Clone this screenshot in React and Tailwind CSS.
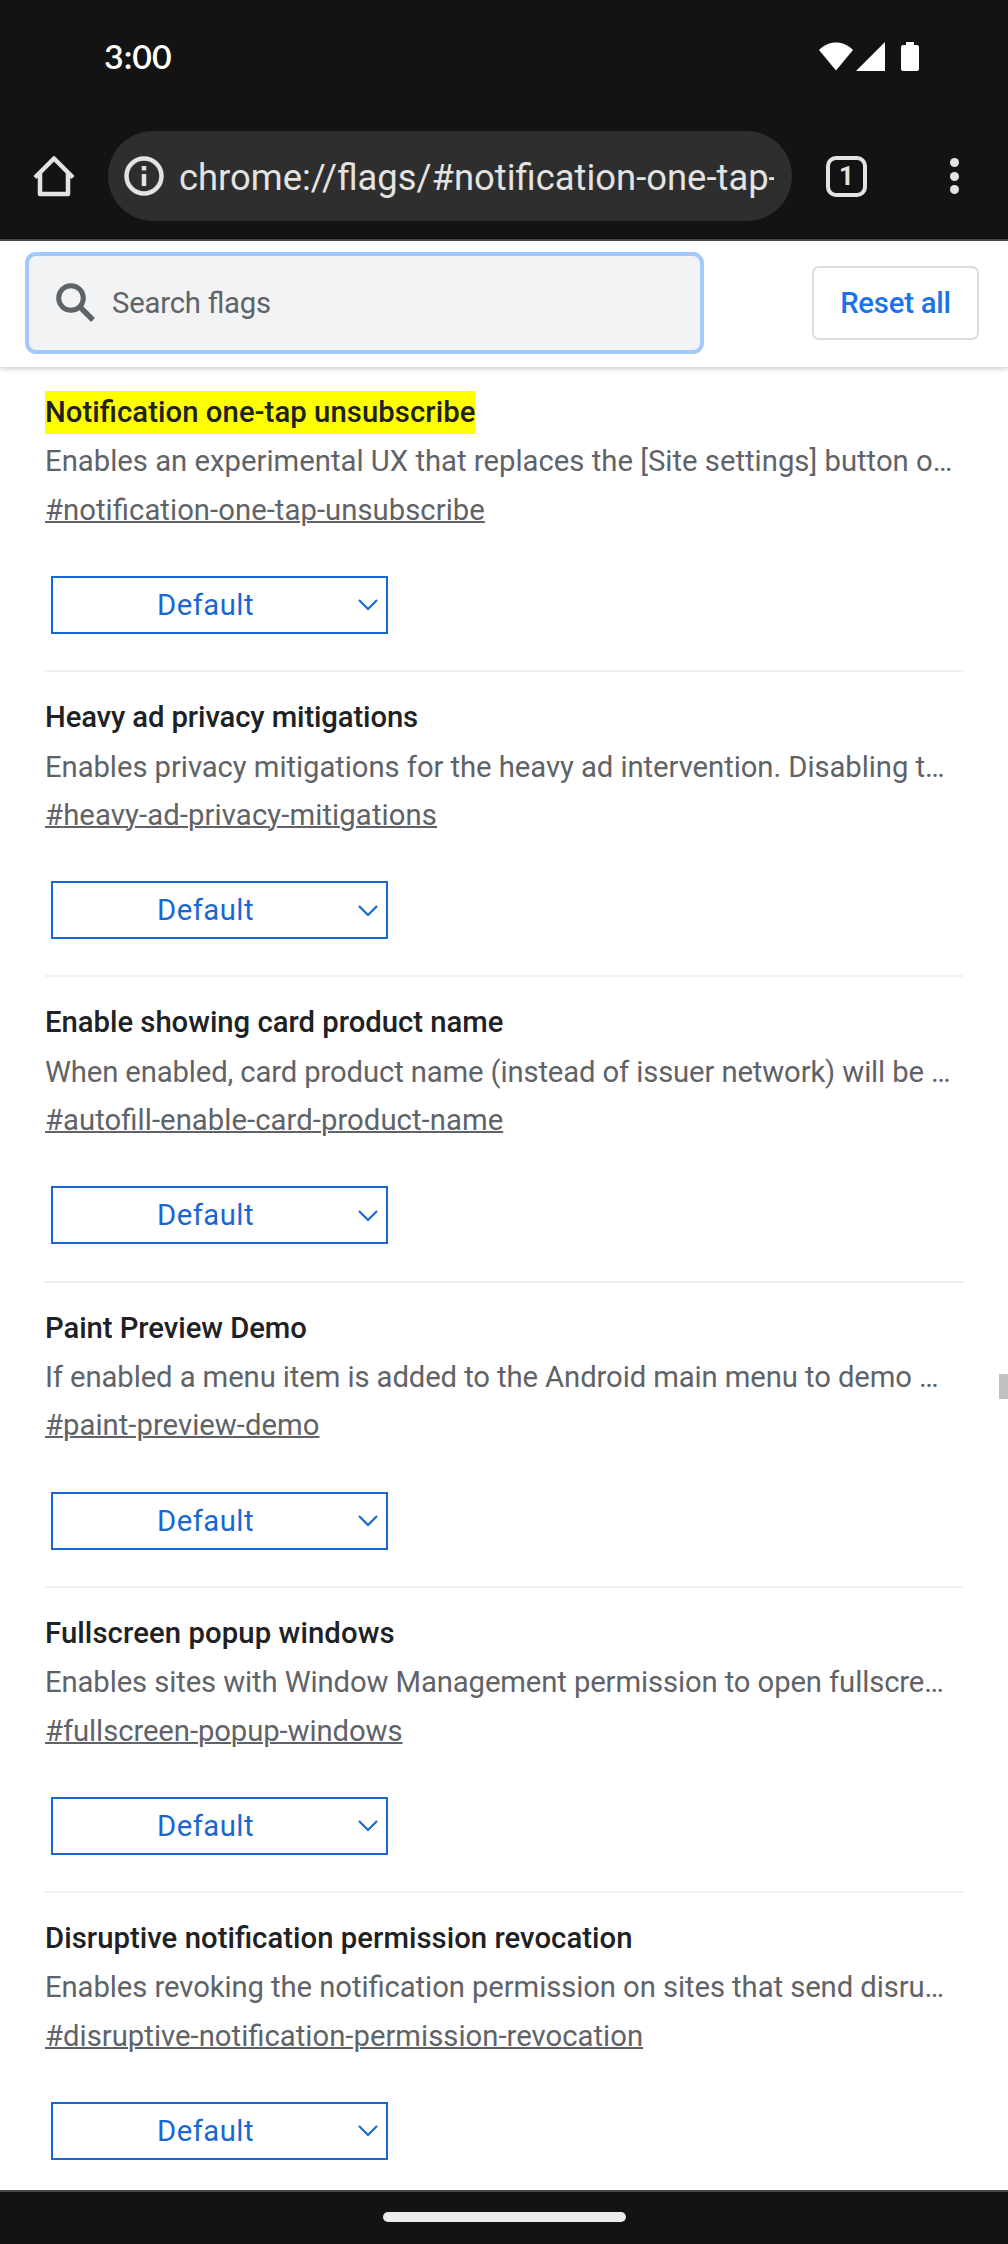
import React, { useState } from 'react';

const flags = [
  {
    id: 'notification-one-tap-unsubscribe',
    name: 'Notification one-tap unsubscribe',
    description: 'Enables an experimental UX that replaces the [Site settings] button o…',
    nameTracking: 'tracking-[0.07px]',
    descriptionTracking: 'tracking-[0.01px]',
    idTracking: 'tracking-[0.05px]',
  },
  {
    id: 'heavy-ad-privacy-mitigations',
    name: 'Heavy ad privacy mitigations',
    description: 'Enables privacy mitigations for the heavy ad intervention. Disabling t…',
    nameTracking: 'tracking-[-0.12px]',
    descriptionTracking: 'tracking-[-0.06px]',
    idTracking: 'tracking-[0.11px]',
  },
  {
    id: 'autofill-enable-card-product-name',
    name: 'Enable showing card product name',
    description: 'When enabled, card product name (instead of issuer network) will be …',
    nameTracking: 'tracking-[-0.01px]',
    descriptionTracking: 'tracking-[-0.13px]',
    idTracking: 'tracking-[0.06px]',
  },
  {
    id: 'paint-preview-demo',
    name: 'Paint Preview Demo',
    description: 'If enabled a menu item is added to the Android main menu to demo …',
    nameTracking: 'tracking-[-0.05px]',
    descriptionTracking: 'tracking-[-0.1px]',
    idTracking: 'tracking-[0.03px]',
  },
  {
    id: 'fullscreen-popup-windows',
    name: 'Fullscreen popup windows',
    description: 'Enables sites with Window Management permission to open fullscre…',
    nameTracking: 'tracking-[0.11px]',
    descriptionTracking: 'tracking-[-0.11px]',
    idTracking: 'tracking-[-0.08px]',
  },
  {
    id: 'disruptive-notification-permission-revocation',
    name: 'Disruptive notification permission revocation',
    description: 'Enables revoking the notification permission on sites that send disru…',
    nameTracking: 'tracking-[0.05px]',
    descriptionTracking: 'tracking-[-0.08px]',
    idTracking: 'tracking-[0.02px]',
  },
];

const StatusBar = () => (
  <div className="h-[112px] pl-[104px] pr-[89px] flex items-center justify-between text-white">
    <span className="text-[32px] leading-none font-semibold font-['Lato',sans-serif] origin-left scale-x-[1.06] pt-[2px]">3:00</span>
    <div className="flex items-center">
      <svg width="34" height="29" viewBox="0 0 34 29" fill="currentColor">
        <path d="M0 8C9.5-2 24.5-2 34 8L17 28.5z" />
      </svg>
      <svg className="ml-[3px]" width="29" height="29" viewBox="0 0 29 29" fill="currentColor">
        <path d="M29 0v29H0z" />
      </svg>
      <svg className="ml-4" width="18" height="29" viewBox="0 0 18 29" fill="currentColor">
        <path d="M5 0h8v3h3a2 2 0 0 1 2 2v22a2 2 0 0 1-2 2H2a2 2 0 0 1-2-2V5a2 2 0 0 1 2-2h3z" />
      </svg>
    </div>
  </div>
);

const Toolbar = () => (
  <div className="h-[129px] pt-[19px] flex items-start border-b-2 border-[#474747] text-[#e3e3e3]">
    <div className="h-[90px] w-[108px] flex items-center pl-[33px]">
      <svg width="42" height="42" viewBox="0 0 42 42" fill="none" stroke="currentColor" strokeWidth="4.5" strokeLinejoin="round">
        <path d="M2 22.5 21 3.5 40 22.5" />
        <path d="M7 18v21h28V18" />
      </svg>
    </div>
    <div className="h-[90px] w-[684px] rounded-full bg-[#2e2e2e] flex items-center pl-4 pr-[18px]">
      <svg className="shrink-0" width="40" height="40" viewBox="0 0 40 40" fill="none" stroke="currentColor">
        <circle cx="20" cy="20" r="17.5" strokeWidth="4.5" />
        <path d="M20 10v4.5M20 18v12" strokeWidth="4.5" />
      </svg>
      <div className="ml-[15px] mt-1 flex-1 overflow-hidden whitespace-nowrap text-[36.4px] leading-[48px]">
        chrome://flags/#notification-one-tap-
      </div>
    </div>
    <div className="h-[90px] flex-1 flex items-center pl-[34px] pr-[49px] justify-between">
      <div className="size-[41px] rounded-[10px] border-4 border-current flex items-center justify-center text-[26px] leading-none font-bold">
        1
      </div>
      <div className="flex flex-col gap-[4.5px]">
        <span className="size-[9px] rounded-full bg-current" />
        <span className="size-[9px] rounded-full bg-current" />
        <span className="size-[9px] rounded-full bg-current" />
      </div>
    </div>
  </div>
);

const SearchHeader = () => {
  const [query, setQuery] = useState('');

  return (
    <div className="relative h-[126px] pl-[25px] pr-[29px] pb-[2px] flex items-center justify-between bg-white shadow-[0_2px_5px_rgba(0,0,0,0.2)]">
      <div className="h-[102px] w-[679px] rounded-[11px] border-[4.5px] border-[#a3c8fa] bg-[#f1f3f4] flex items-center pl-[27px]">
        <svg width="40" height="40" viewBox="0 0 40 40" fill="none" stroke="#5f6368" strokeWidth="5">
          <circle cx="15" cy="15" r="12.3" />
          <path d="M24 24 37 37" strokeWidth="5.5" />
        </svg>
        <input
          type="text"
          value={query}
          onChange={(e) => setQuery(e.target.value)}
          placeholder="Search flags"
          className="ml-4 mt-[2px] flex-1 bg-transparent text-[29.25px] tracking-[-0.2px] text-[#202124] placeholder:text-[#5f6368] focus:outline-none"
        />
      </div>
      <button className="h-[74px] w-[167px] pt-[1px] rounded-[7px] border-2 border-[#dadce0] text-[29.25px] tracking-[-0.2px] font-medium text-[#1a73e8]">
        Reset all
      </button>
    </div>
  );
};

const Flag = ({ flag, highlighted }) => (
  <div className="h-[305.2px] pt-6 border-b-2 border-[#eff0f1] text-[29.25px] leading-[43px] text-[#5f6368]">
    <h3 className={`font-medium text-[#202124] ${flag.nameTracking}`}>
      <span className={highlighted ? 'inline-block bg-[#ffff00]' : 'inline-block'}>{flag.name}</span>
    </h3>
    <p className={`mt-[6.4px] whitespace-nowrap ${flag.descriptionTracking}`}>{flag.description}</p>
    <a
      href={`#${flag.id}`}
      className={`mt-[5.4px] block w-fit underline decoration-2 whitespace-nowrap ${flag.idTracking}`}
    >
      #{flag.id}
    </a>
    <button className="mt-[44.2px] ml-[6px] h-[58px] w-[337px] pt-[1px] border-2 border-[#1967d2] flex items-center pr-[8px] text-[#1967d2]">
      <span className="flex-1 tracking-[0.5px]">Default</span>
      <svg width="20" height="12" viewBox="0 0 20 12" fill="none" stroke="currentColor" strokeWidth="2.2">
        <path d="M1 1l9 9 9-9" />
      </svg>
    </button>
  </div>
);

export default function App() {
  return (
    <div className="relative w-[1008px] h-[2244px] flex flex-col overflow-hidden bg-[#131313] font-['Roboto',sans-serif] [font-feature-settings:'liga'_1]">
      <StatusBar />
      <Toolbar />
      <main className="flex-1 min-h-0 bg-white overflow-hidden">
        <SearchHeader />
        <div className="px-[45px]">
          {flags.map((flag, index) => (
            <Flag key={flag.id} flag={flag} highlighted={index === 0} />
          ))}
        </div>
      </main>
      {/* scrollbar thumb */}
      <div className="absolute right-0 top-[1374px] h-[25px] w-[9px] bg-[#c1c1c1]" />
      <footer className="h-[54px] border-t-2 border-[#474747] flex justify-center pt-5">
        <div className="h-[10px] w-[243px] rounded-full bg-[#ececec]" />
      </footer>
    </div>
  );
}
